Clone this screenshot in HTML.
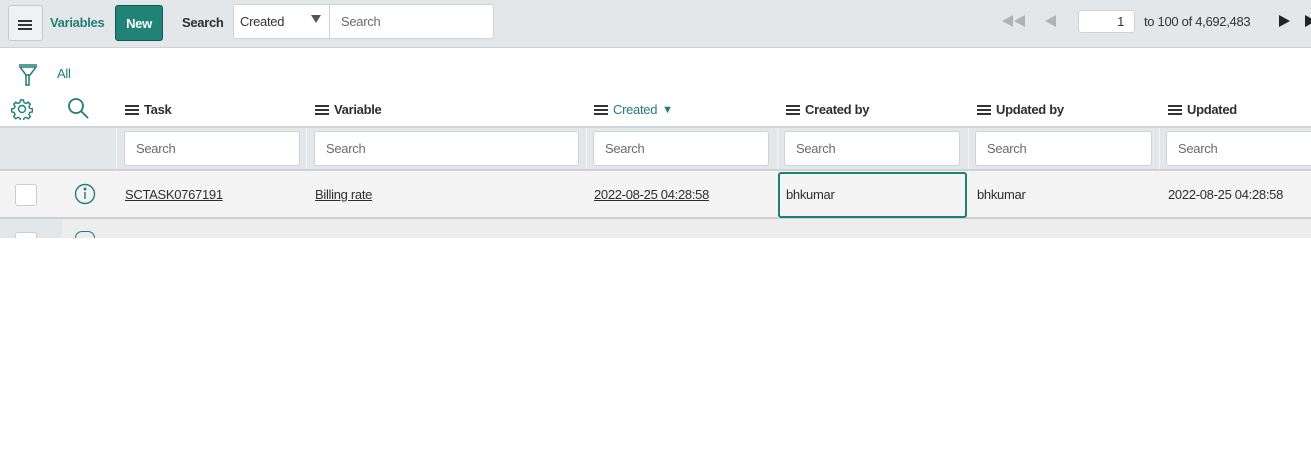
<!DOCTYPE html>
<html><head><meta charset="utf-8"><style>
*{box-sizing:border-box;margin:0;padding:0}
body{width:1311px;height:460px;background:#fff;font-family:"Liberation Sans",sans-serif;font-size:13px;letter-spacing:-0.3px;color:#2e2e2e;position:relative;overflow:hidden}
.a{position:absolute}
.hdr{left:0;top:0;width:1311px;height:48px;background:#e4e7ea;border-bottom:1px solid #cfd2d5}
.inp{background:#fff;border:1px solid #cfd3d6;border-radius:3px;color:#6b6b6b;font-size:13px;padding-left:11px;display:flex;align-items:center}
.col{top:102px;font-size:13px;font-weight:bold;color:#2e2e2e;display:flex;align-items:center;gap:5px}
.hb{display:inline-block;width:14px;height:10px;border-top:2px solid #333;border-bottom:2px solid #333;position:relative}
.hb:after{content:"";position:absolute;left:0;right:0;top:2px;border-top:2px solid #333}
.cell{top:187px;font-size:13px}
u{text-decoration:underline}
</style></head><body>
<div class="a hdr"></div>
<div class="a" style="left:8px;top:5px;width:35px;height:36px;border:1px solid #c5c9cc;border-radius:3px;background:#f0f1f2"></div>
<div class="a" style="left:18px;top:18px"><span class="hb"></span></div>
<div class="a" style="left:50px;top:15px;color:#1f7f72;font-weight:bold;font-size:13px">Variables</div>
<div class="a" style="left:115px;top:5px;width:48px;height:36px;background:#1f8476;border:1px solid #15594f;border-radius:3px;color:#fff;font-weight:bold;display:flex;align-items:center;justify-content:center">New</div>
<div class="a" style="left:182px;top:15px;font-weight:bold">Search</div>
<div class="a inp" style="left:233px;top:4px;width:97px;height:35px;color:#333;padding-left:6px;border-radius:3px 0 0 3px">Created</div>
<div class="a" style="left:311px;top:15px;width:0;height:0;border-left:5px solid transparent;border-right:5px solid transparent;border-top:8px solid #555"></div>
<div class="a inp" style="left:329px;top:4px;width:165px;height:35px;border-radius:0 3px 3px 0">Search</div>
<svg class="a" style="left:1002px;top:14px" width="60" height="14"><polygon points="0,7 11,1 11,13" fill="#b0b3b6"/><polygon points="12,7 23,1 23,13" fill="#b0b3b6"/><polygon points="43,7 54,1 54,13" fill="#b0b3b6"/></svg>
<div class="a inp" style="left:1078px;top:10px;width:57px;height:23px;justify-content:flex-end;padding-right:10px;color:#333">1</div>
<div class="a" style="left:1144px;top:14px;color:#333">to 100 of 4,692,483</div>
<svg class="a" style="left:1279px;top:14px" width="32" height="14"><polygon points="0,1 11,7 0,13" fill="#222"/><polygon points="26,1 37,7 26,13" fill="#222"/></svg>
<svg class="a" style="left:17px;top:63px" width="22" height="24" fill="none" stroke="#1f7f72" stroke-width="1.5"><path d="M2 2h18M3 4h16l-6 8h-4z"/><path d="M9 12v10h3v-10"/></svg>
<div class="a" style="left:57px;top:66px;color:#1f7f72">All</div>
<svg class="a" style="left:11px;top:98px" width="22" height="22" fill="none" stroke="#1f7f72" stroke-width="1.4"><circle cx="11" cy="11" r="3.5"/><path d="M9.5 2h3l.5 2.5 2 1 2.2-1.4 2.1 2.1-1.4 2.2 1 2 2.5.5v3l-2.5.5-1 2 1.4 2.2-2.1 2.1-2.2-1.4-2 1-.5 2.5h-3l-.5-2.5-2-1-2.2 1.4-2.1-2.1 1.4-2.2-1-2-2.5-.5v-3l2.5-.5 1-2-1.4-2.2 2.1-2.1 2.2 1.4 2-1z"/></svg>
<svg class="a" style="left:67px;top:97px" width="24" height="24" fill="none" stroke="#1f7f72" stroke-width="1.8"><circle cx="9" cy="9" r="7"/><path d="M14 14l7 7"/></svg>
<div class="a col" style="left:125px"><span class="hb"></span>Task</div>
<div class="a col" style="left:315px"><span class="hb"></span>Variable</div>
<div class="a col" style="left:594px;color:#1f7f72;font-weight:normal"><span class="hb"></span>Created <span style="font-size:11px">▼</span></div>
<div class="a col" style="left:786px"><span class="hb"></span>Created by</div>
<div class="a col" style="left:977px"><span class="hb"></span>Updated by</div>
<div class="a col" style="left:1168px"><span class="hb"></span>Updated</div>
<div class="a" style="left:0;top:126px;width:1311px;height:45px;background:#e4e7ea;border-top:2px solid #d3d6d9;border-bottom:2px solid #cfd2d5"></div>
<div class="a" style="left:116px;top:128px;width:1px;height:41px;background:#f3f4f5"></div>
<div class="a" style="left:306px;top:128px;width:1px;height:41px;background:#f3f4f5"></div>
<div class="a" style="left:586px;top:128px;width:1px;height:41px;background:#f3f4f5"></div>
<div class="a" style="left:777px;top:128px;width:1px;height:41px;background:#f3f4f5"></div>
<div class="a" style="left:968px;top:128px;width:1px;height:41px;background:#f3f4f5"></div>
<div class="a" style="left:1159px;top:128px;width:1px;height:41px;background:#f3f4f5"></div>
<div class="a inp" style="left:124px;top:131px;width:176px;height:35px">Search</div>
<div class="a inp" style="left:314px;top:131px;width:265px;height:35px">Search</div>
<div class="a inp" style="left:593px;top:131px;width:176px;height:35px">Search</div>
<div class="a inp" style="left:784px;top:131px;width:176px;height:35px">Search</div>
<div class="a inp" style="left:975px;top:131px;width:177px;height:35px">Search</div>
<div class="a inp" style="left:1166px;top:131px;width:150px;height:35px">Search</div>
<div class="a" style="left:0;top:171px;width:1311px;height:48px;background:#f4f4f4;border-bottom:2px solid #d0d0d0"></div>
<div class="a" style="left:15px;top:184px;width:22px;height:22px;background:#fff;border:1px solid #ccc;border-radius:3px"></div>
<svg class="a" style="left:74px;top:183px" width="22" height="22" fill="none" stroke="#1f7f72" stroke-width="1.4"><circle cx="11" cy="11" r="9.5"/><path d="M11 9v7"/><circle cx="11" cy="6" r=".8" fill="#1f7f72"/></svg>
<div class="a cell" style="left:125px"><u>SCTASK0767191</u></div>
<div class="a cell" style="left:315px"><u>Billing rate</u></div>
<div class="a cell" style="left:594px"><u>2022-08-25 04:28:58</u></div>
<div class="a" style="left:778px;top:172px;width:189px;height:46px;border:2px solid #1f7f72;border-radius:3px"></div>
<div class="a cell" style="left:786px">bhkumar</div>
<div class="a cell" style="left:977px">bhkumar</div>
<div class="a cell" style="left:1168px">2022-08-25 04:28:58</div>
<div class="a" style="left:0;top:219px;width:1311px;height:19px;background:#ededed"></div>
<div class="a" style="left:0;top:219px;width:62px;height:19px;background:#e4e7ea"></div>
<div class="a" style="left:15px;top:232px;width:22px;height:6px;background:#fff;border:1px solid #ccc;border-bottom:none;border-radius:3px 3px 0 0"></div>
<div class="a" style="left:75px;top:231px;width:20px;height:7px;border:1.4px solid #1f7f72;border-bottom:none;border-radius:10px 10px 0 0"></div>
</body></html>
